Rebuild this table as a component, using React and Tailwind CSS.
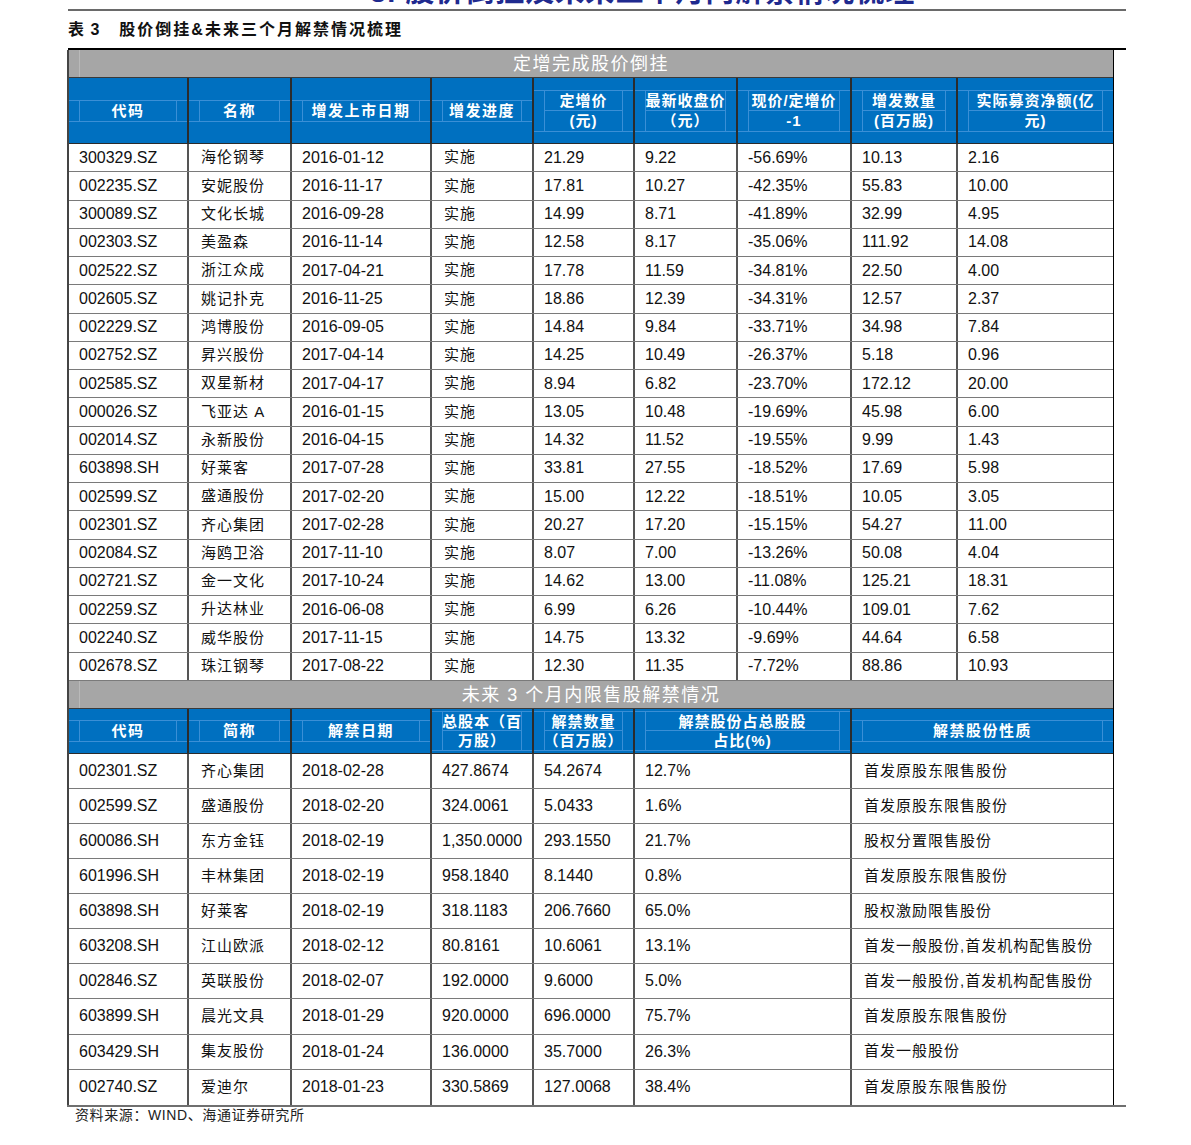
import React from 'react'

const FONT = { fontFamily: '"Liberation Sans", "Noto Sans CJK SC", sans-serif' }

const rows1 = [
  ['300329.SZ', '海伦钢琴', '2016-01-12', '实施', '21.29', '9.22', '-56.69%', '10.13', '2.16'],
  ['002235.SZ', '安妮股份', '2016-11-17', '实施', '17.81', '10.27', '-42.35%', '55.83', '10.00'],
  ['300089.SZ', '文化长城', '2016-09-28', '实施', '14.99', '8.71', '-41.89%', '32.99', '4.95'],
  ['002303.SZ', '美盈森', '2016-11-14', '实施', '12.58', '8.17', '-35.06%', '111.92', '14.08'],
  ['002522.SZ', '浙江众成', '2017-04-21', '实施', '17.78', '11.59', '-34.81%', '22.50', '4.00'],
  ['002605.SZ', '姚记扑克', '2016-11-25', '实施', '18.86', '12.39', '-34.31%', '12.57', '2.37'],
  ['002229.SZ', '鸿博股份', '2016-09-05', '实施', '14.84', '9.84', '-33.71%', '34.98', '7.84'],
  ['002752.SZ', '昇兴股份', '2017-04-14', '实施', '14.25', '10.49', '-26.37%', '5.18', '0.96'],
  ['002585.SZ', '双星新材', '2017-04-17', '实施', '8.94', '6.82', '-23.70%', '172.12', '20.00'],
  ['000026.SZ', '飞亚达 A', '2016-01-15', '实施', '13.05', '10.48', '-19.69%', '45.98', '6.00'],
  ['002014.SZ', '永新股份', '2016-04-15', '实施', '14.32', '11.52', '-19.55%', '9.99', '1.43'],
  ['603898.SH', '好莱客', '2017-07-28', '实施', '33.81', '27.55', '-18.52%', '17.69', '5.98'],
  ['002599.SZ', '盛通股份', '2017-02-20', '实施', '15.00', '12.22', '-18.51%', '10.05', '3.05'],
  ['002301.SZ', '齐心集团', '2017-02-28', '实施', '20.27', '17.20', '-15.15%', '54.27', '11.00'],
  ['002084.SZ', '海鸥卫浴', '2017-11-10', '实施', '8.07', '7.00', '-13.26%', '50.08', '4.04'],
  ['002721.SZ', '金一文化', '2017-10-24', '实施', '14.62', '13.00', '-11.08%', '125.21', '18.31'],
  ['002259.SZ', '升达林业', '2016-06-08', '实施', '6.99', '6.26', '-10.44%', '109.01', '7.62'],
  ['002240.SZ', '威华股份', '2017-11-15', '实施', '14.75', '13.32', '-9.69%', '44.64', '6.58'],
  ['002678.SZ', '珠江钢琴', '2017-08-22', '实施', '12.30', '11.35', '-7.72%', '88.86', '10.93'],
]

const rows2 = [
  ['002301.SZ', '齐心集团', '2018-02-28', '427.8674', '54.2674', '12.7%', '首发原股东限售股份'],
  ['002599.SZ', '盛通股份', '2018-02-20', '324.0061', '5.0433', '1.6%', '首发原股东限售股份'],
  ['600086.SH', '东方金钰', '2018-02-19', '1,350.0000', '293.1550', '21.7%', '股权分置限售股份'],
  ['601996.SH', '丰林集团', '2018-02-19', '958.1840', '8.1440', '0.8%', '首发原股东限售股份'],
  ['603898.SH', '好莱客', '2018-02-19', '318.1183', '206.7660', '65.0%', '股权激励限售股份'],
  ['603208.SH', '江山欧派', '2018-02-12', '80.8161', '10.6061', '13.1%', '首发一般股份,首发机构配售股份'],
  ['002846.SZ', '英联股份', '2018-02-07', '192.0000', '9.6000', '5.0%', '首发一般股份,首发机构配售股份'],
  ['603899.SH', '晨光文具', '2018-01-29', '920.0000', '696.0000', '75.7%', '首发原股东限售股份'],
  ['603429.SH', '集友股份', '2018-01-24', '136.0000', '35.7000', '26.3%', '首发一般股份'],
  ['002740.SZ', '爱迪尔', '2018-01-23', '330.5869', '127.0068', '38.4%', '首发原股东限售股份'],
]

const head1 = [
  ['代码'], ['名称'], ['增发上市日期'], ['增发进度'],
  ['定增价', '(元)'], ['最新收盘价', '（元）'], ['现价/定增价', '-1'], ['增发数量', '(百万股)'], ['实际募资净额(亿', '元)'],
]

const head2 = [
  ['代码'], ['简称'], ['解禁日期'], ['总股本（百', '万股）'], ['解禁数量', '（百万股）'], ['解禁股份占总股股', '占比(%)'], ['解禁股份性质'],
]

const isCjk = s => /[\u4e00-\u9fff]/.test(s)

function HeadCell({ lines, last, compact }) {
  return (
    <div className={`flex flex-col justify-center ${last ? '' : 'border-r-2 border-[#2b2b2b]'}`}>
      {lines.length === 1 ? (
        <div className="h-[22px] border-y border-[#3a8fd6]">
          <div className="mx-[10px] h-full border-x border-[#3a8fd6] flex items-center justify-center pt-[1px] text-white text-[15px] font-bold tracking-[1.5px] whitespace-nowrap">
            {lines[0]}
          </div>
        </div>
      ) : (
        <div className={`${compact ? 'h-[40px]' : 'h-[42px]'} border-y border-[#3a8fd6]`}>
          <div className="mx-[10px] h-full border-x border-[#3a8fd6] flex flex-col leading-none text-white text-[15px] font-bold tracking-[1px] whitespace-nowrap">
            <div className="flex-1 flex items-center justify-center border-b border-[#3a8fd6]">{lines[0]}</div>
            <div className="flex-1 flex items-center justify-center">{lines[1]}</div>
          </div>
        </div>
      )}
    </div>
  )
}

function DataCell({ text, last }) {
  return (
    <div className={`flex items-center px-[10px] whitespace-nowrap text-[#111] ${last ? '' : 'border-r-2 border-[#555]'} ${isCjk(text) ? 'text-[15px] tracking-[1px] pl-[12px]' : 'text-[16px]'}`}>
      {text}
    </div>
  )
}

function Band({ children }) {
  return (
    <div className="h-[28px] bg-[#a6a6a6] border-b border-[#3a3a3a] flex">
      <div className="ml-[10px] w-px bg-[#b9b9b9]" />
      <div className="flex-1 flex items-center justify-center pt-[2px] text-white text-[18px] tracking-[1.5px] -ml-[11px]">{children}</div>
    </div>
  )
}

export default function App() {
  return (
    <div className="w-[1191px] h-[1145px] bg-white overflow-hidden" style={FONT}>
      <div className="h-[9px] overflow-hidden">
        <div className="ml-[370px] -mt-[22px] text-[29px] leading-none font-bold text-[#1f2a8f] whitespace-nowrap tracking-[1px]">
          3. 股价倒挂及未来三个月内解禁情况梳理
        </div>
      </div>
      <div className="ml-[68px] w-[1058px] h-[2px] bg-[#6a6a6a]" />
      <div className="ml-[68px] h-[37px] flex items-center pt-[1px] text-[16px] font-bold text-[#111] tracking-[1px]">
        <span>表 3</span>
        <span className="ml-[19px] tracking-[2px]">股价倒挂&未来三个月解禁情况梳理</span>
      </div>
      <div className="ml-[68px] w-[1058px] h-[2px] bg-black" />

      <div className="ml-[67px] w-[1047px] border-l-2 border-l-[#444] border-r border-r-black">
        <Band>定增完成股价倒挂</Band>
        <div className="grid grid-cols-[120px_103px_140px_102px_101px_103px_114px_106px_1fr] h-[66px] bg-[#0070c0] border-b border-[#2b2b2b]">
          {head1.map((l, i) => <HeadCell key={i} lines={l} last={i === head1.length - 1} />)}
        </div>
        {rows1.map((r, ri) => (
          <div key={ri} className="grid grid-cols-[120px_103px_140px_102px_101px_103px_114px_106px_1fr] h-[28.25px] border-b border-[#7a7a7a]">
            {r.map((c, ci) => <DataCell key={ci} text={c} last={ci === r.length - 1} />)}
          </div>
        ))}

        <Band>未来 3 个月内限售股解禁情况</Band>
        <div className="grid grid-cols-[120px_103px_140px_102px_101px_217px_1fr] h-[45px] bg-[#0070c0] border-b border-[#2b2b2b]">
          {head2.map((l, i) => <HeadCell key={i} lines={l} last={i === head2.length - 1} compact />)}
        </div>
        {rows2.map((r, ri) => (
          <div key={ri} className={`grid grid-cols-[120px_103px_140px_102px_101px_217px_1fr] h-[35.1px] ${ri === rows2.length - 1 ? '' : 'border-b border-[#7a7a7a]'}`}>
            {r.map((c, ci) => <DataCell key={ci} text={c} last={ci === r.length - 1} />)}
          </div>
        ))}
      </div>
      <div className="ml-[67px] w-[1059px] h-[2px] bg-[#6f6f6f]" />
      <div className="ml-[75px] h-[18px] flex items-center text-[14px] tracking-[0.6px] text-[#222]">
        资料来源：WIND、海通证券研究所
      </div>
    </div>
  )
}
